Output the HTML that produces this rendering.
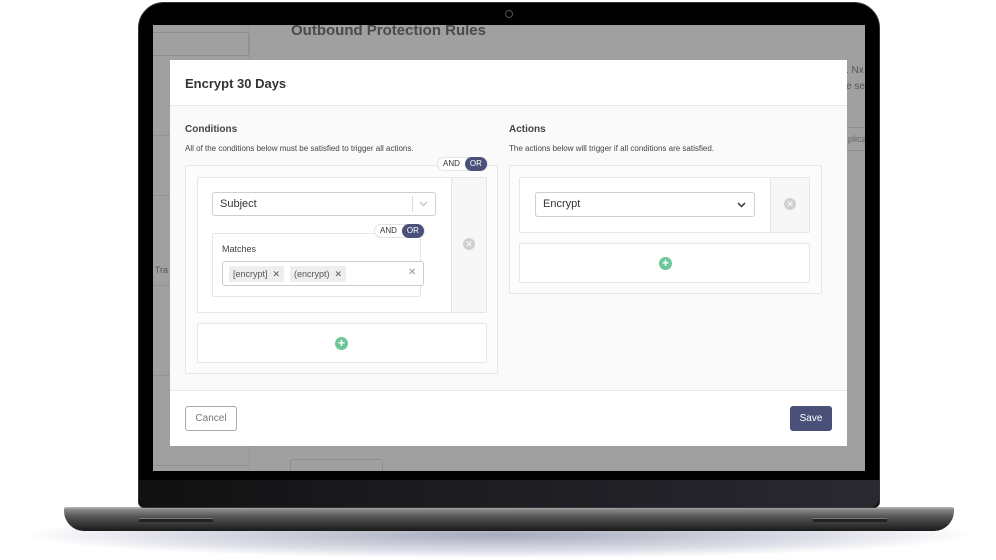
<!DOCTYPE html>
<html><head><style>
*{box-sizing:border-box;margin:0;padding:0}
body{width:996px;height:560px;background:#fff;position:relative;overflow:hidden;font-family:"Liberation Sans",sans-serif;color:#333}
.a{position:absolute;white-space:nowrap}
.shadow{left:30px;top:512px;width:936px;height:46px;border-radius:50%;background:radial-gradient(ellipse at center,rgba(110,115,145,.6) 0%,rgba(160,165,190,.35) 50%,rgba(255,255,255,0) 72%)}
.lid{left:138px;top:2px;width:742px;height:506px;background:#000;border-radius:26px 26px 6px 6px;border:1px solid #333}
.bezel{left:139px;top:480px;width:740px;height:27px;background:linear-gradient(90deg,#111,#1c1b20 40%,#2a2930);border-radius:0 0 8px 8px}
.base{left:64px;top:507px;width:890px;height:24px;border-radius:2px 2px 20px 20px;background:linear-gradient(#bdbdbd 0,#8a8a8a 10%,#555 40%,#333 75%,#1a1a1a 100%)}
.slot{top:518px;width:74px;height:4px;background:#222;border-top:1px solid #777}
.screen{left:153px;top:25px;width:712px;height:446px;background:#a0a0a0;overflow:hidden}
.modal{left:170px;top:60px;width:677px;height:386px;background:#fafafa}
.box{background:#fff;border:1px solid #e6e6e6;border-radius:2px}
.sel{background:#fff;border:1px solid #cfcfcf;border-radius:3px;font-size:11px;color:#333;padding-left:7px;line-height:22px}
.tog{height:14px;border-radius:7px;background:#fff;border:1px solid #e3e3e3;font-size:8px;line-height:12px}
.tog span{display:inline-block;padding:0 5px}
.tog .or{background:#4a5178;color:#fff;border-radius:7px;height:14px;margin-top:-1px;line-height:14px}
.plus{width:13px;height:13px;border-radius:50%;background:#6cc79b;color:#fff;font-size:12px;line-height:13px;text-align:center;font-weight:bold}
.x{width:12px;height:12px;border-radius:50%;background:#d0d0d0;color:#fff;font-size:9px;line-height:12px;text-align:center}
.tag{background:#eee;font-size:9px;color:#555;padding:0 4px;height:16px;line-height:16px;top:4px}
</style></head><body>
<div class="a shadow"></div>
<div class="a base"></div>
<div class="a slot" style="left:139px"></div>
<div class="a slot" style="left:813px"></div>
<div class="a lid"></div>
<div class="a bezel"></div>
<div class="a" style="left:505px;top:10px;width:8px;height:8px;border:1px solid #555;border-radius:50%"></div>
<div class="a screen">
 <div class="a" style="left:138px;top:-3px;font-size:15px;font-weight:bold;color:#4a4a4a">Outbound Protection Rules</div>
 <div class="a" style="left:-10px;top:7px;width:106px;height:24px;border:1px solid #8d8d8d;border-radius:3px"></div>
 <div class="a" style="left:0;top:110px;width:96px;height:1px;background:#929292"></div>
 <div class="a" style="left:0;top:170px;width:96px;height:1px;background:#929292"></div>
 <div class="a" style="left:0;top:260px;width:96px;height:1px;background:#929292"></div>
 <div class="a" style="left:0;top:350px;width:96px;height:1px;background:#929292"></div>
 <div class="a" style="left:0;top:440px;width:96px;height:1px;background:#929292"></div>
 <div class="a" style="left:96px;top:0;width:1px;height:446px;background:#959595"></div>
 <div class="a" style="left:-5px;top:240px;font-size:9px;color:#555">s Tra</div>
 <div class="a" style="left:688px;top:38px;font-size:10px;color:#555;line-height:16px">x. Nx<br>ce se</div>
 <div class="a" style="left:680px;top:102px;width:40px;height:24px;border:1px solid #8d8d8d;font-size:9px;color:#666;padding:6px 0 0 14px">plica</div>
 <div class="a" style="left:137px;top:434px;width:93px;height:20px;border:1px solid #8d8d8d;border-radius:3px"></div>
</div>
<div class="a modal">
 <div class="a" style="left:0;top:0;width:677px;height:46px;background:#fff;border-bottom:1px solid #e8e8e8"></div>
 <div class="a" style="left:15px;top:16px;font-size:13px;font-weight:bold;color:#333">Encrypt 30 Days</div>
 <div class="a" style="left:15px;top:64px;font-size:10px;font-weight:bold;color:#444">Conditions</div>
 <div class="a" style="left:15px;top:84px;font-size:8px;color:#444">All of the conditions below must be satisfied to trigger all actions.</div>
 <div class="a" style="left:339px;top:64px;font-size:10px;font-weight:bold;color:#444">Actions</div>
 <div class="a" style="left:339px;top:84px;font-size:8px;color:#444">The actions below will trigger if all conditions are satisfied.</div>
 <div class="a" style="left:0;top:330px;width:677px;height:56px;background:#fff;border-top:1px solid #e8e8e8"></div>
 <div class="a" style="left:15px;top:346px;width:52px;height:25px;border:1px solid #aaa;border-radius:3px;font-size:10px;color:#777;text-align:center;line-height:23px;background:#fff">Cancel</div>
 <div class="a" style="left:620px;top:346px;width:42px;height:25px;background:#4a5178;border-radius:3px;font-size:10px;color:#fff;text-align:center;line-height:25px">Save</div>
</div>
<div class="a box" style="left:185px;top:165px;width:313px;height:209px;background:#fcfcfc"></div>
<div class="a box" style="left:197px;top:177px;width:290px;height:136px"></div>
<div class="a" style="left:451px;top:178px;width:35px;height:134px;background:#f7f7f7;border-left:1px solid #e6e6e6"></div>
<div class="a x" style="left:463px;top:238px">✕</div>
<div class="a sel" style="left:212px;top:192px;width:224px;height:24px">Subject</div>
<div class="a" style="left:412px;top:196px;width:1px;height:16px;background:#ddd"></div>
<svg class="a" style="left:419px;top:201px" width="9" height="6"><path d="M1 1l3.5 3.5L8 1" stroke="#bbb" fill="none"/></svg>
<div class="a box" style="left:212px;top:233px;width:209px;height:64px"></div>
<div class="a" style="left:222px;top:244px;font-size:9px;color:#444">Matches</div>
<div class="a" style="left:222px;top:261px;width:202px;height:25px;border:1px solid #ccc;border-radius:3px;background:#fff">
 <div class="a tag" style="left:6px">[encrypt]&nbsp;&nbsp;✕</div>
 <div class="a tag" style="left:67px">(encrypt)&nbsp;&nbsp;✕</div>
 <div class="a" style="left:185px;top:5px;font-size:10px;color:#999">✕</div>
</div>
<div class="a tog" style="left:437px;top:157px"><span>AND</span><span class="or">OR</span></div>
<div class="a tog" style="left:374px;top:224px"><span>AND</span><span class="or">OR</span></div>
<div class="a box" style="left:197px;top:323px;width:290px;height:40px"></div>
<div class="a plus" style="left:335px;top:337px">+</div>
<div class="a box" style="left:509px;top:165px;width:313px;height:129px;background:#fcfcfc"></div>
<div class="a box" style="left:519px;top:177px;width:291px;height:56px"></div>
<div class="a" style="left:770px;top:178px;width:39px;height:54px;background:#f7f7f7;border-left:1px solid #e6e6e6"></div>
<div class="a x" style="left:784px;top:198px">✕</div>
<div class="a sel" style="left:535px;top:192px;width:220px;height:25px">Encrypt</div>
<svg class="a" style="left:737px;top:202px" width="9" height="6"><path d="M1 1l3.5 3.5L8 1" stroke="#333" stroke-width="1.5" fill="none"/></svg>
<div class="a box" style="left:519px;top:243px;width:291px;height:40px"></div>
<div class="a plus" style="left:659px;top:257px">+</div>
</body></html>
